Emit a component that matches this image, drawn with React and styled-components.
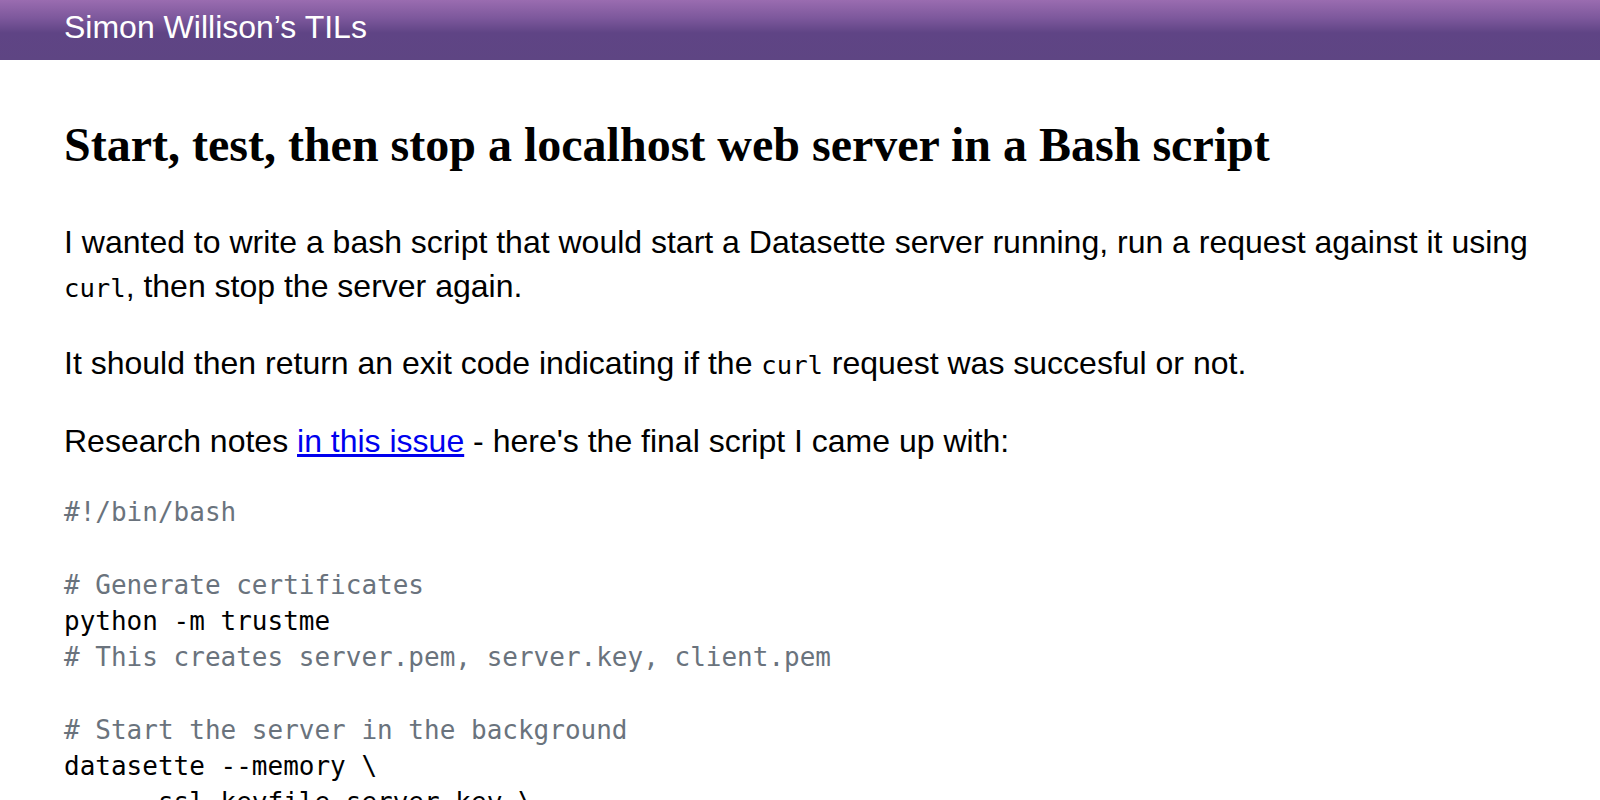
import React from 'react'
import styled, { createGlobalStyle } from 'styled-components'

const GlobalStyle = createGlobalStyle`
  html, body {
    margin: 0;
    padding: 0;
    background: #fff;
  }
  body {
    font-family: "Liberation Sans", Arial, Helvetica, sans-serif;
  }
`

const Header = styled.header`
  height: 60px;
  padding: 0 64px;
  display: flex;
  align-items: center;
  background: linear-gradient(to bottom, #9a6cb0 0%, #7d589c 30%, #5f4485 55%, #5e4583 100%);
`

const SiteTitle = styled.a`
  color: #fff;
  font-size: 32px;
  text-decoration: none;
  margin-top: -6px;
`

const Main = styled.main`
  padding: 0 64px;
`

const Title = styled.h1`
  font-family: "Liberation Serif", "Times New Roman", serif;
  font-weight: bold;
  font-size: 48px;
  line-height: 1.2;
  margin: 56px 0 46px;
  color: #000;
`

const Para = styled.p`
  font-size: 32px;
  line-height: 44px;
  margin: 0 0 31.5px;
  color: #000;
`

const InlineCode = styled.code`
  font-family: "DejaVu Sans Mono", monospace;
  font-size: 25.6px;
`

const Link = styled.a`
  color: #0000ee;
  text-decoration: underline;
`

const Pre = styled.pre`
  font-family: "DejaVu Sans Mono", monospace;
  font-size: 26px;
  line-height: 36.3px;
  margin: 0;
  color: #000;
`

const Comment = styled.span`
  color: #6a737d;
`

const lines = [
  ['c', '#!/bin/bash'],
  ['t', ''],
  ['c', '# Generate certificates'],
  ['t', 'python -m trustme'],
  ['c', '# This creates server.pem, server.key, client.pem'],
  ['t', ''],
  ['c', '# Start the server in the background'],
  ['t', 'datasette --memory \\'],
  ['t', '    --ssl-keyfile server.key \\'],
  ['t', '    --ssl-certfile server.pem \\'],
  ['t', '    -p 8152 &'],
]

export default function App() {
  return (
    <>
      <GlobalStyle />
      <Header>
        <SiteTitle href="#">Simon Willison’s TILs</SiteTitle>
      </Header>
      <Main>
        <Title>Start, test, then stop a localhost web server in a Bash script</Title>
        <Para>
          I wanted to write a bash script that would start a Datasette server running, run a request against it using{' '}
          <InlineCode>curl</InlineCode>, then stop the server again.
        </Para>
        <Para>
          It should then return an exit code indicating if the <InlineCode>curl</InlineCode> request was succesful or not.
        </Para>
        <Para>
          Research notes <Link href="#">in this issue</Link> - here's the final script I came up with:
        </Para>
        <Pre>
          {lines.map(([kind, text], i) => (
            <React.Fragment key={i}>
              {kind === 'c' ? <Comment>{text}</Comment> : text}
              {'\n'}
            </React.Fragment>
          ))}
        </Pre>
      </Main>
    </>
  )
}
